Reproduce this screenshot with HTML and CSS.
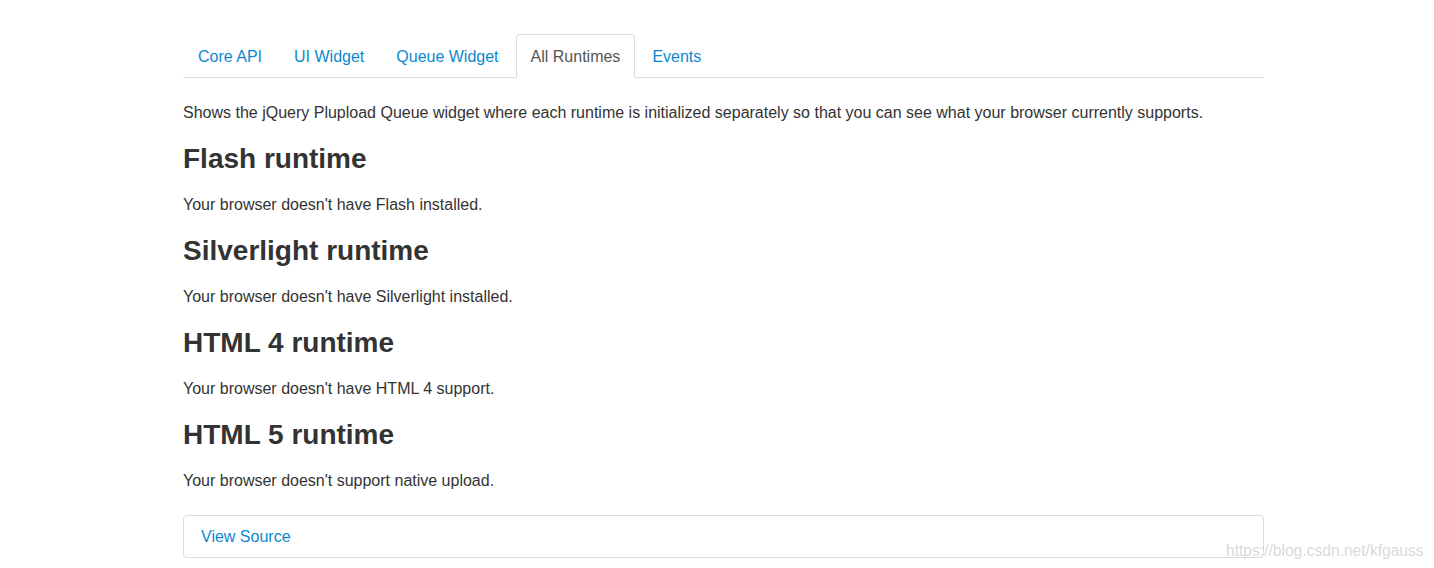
FILE: index.html
```html
<!DOCTYPE html>
<html lang="en">
<head>
<meta charset="utf-8">
<title>Plupload – All Runtimes</title>
<link rel="stylesheet" href="styles.css">
</head>
<body>
<div class="container">
  <ul class="nav-tabs">
    <li><a href="#">Core API</a></li>
    <li><a href="#">UI Widget</a></li>
    <li><a href="#">Queue Widget</a></li>
    <li class="active"><a href="#">All Runtimes</a></li>
    <li><a href="#">Events</a></li>
  </ul>
  <div class="tab-content">
    <p>Shows the jQuery Plupload Queue widget where each runtime is initialized separately so that you can see what your browser currently supports.</p>
    <h2>Flash runtime</h2>
    <p>Your browser doesn't have Flash installed.</p>
    <h2>Silverlight runtime</h2>
    <p>Your browser doesn't have Silverlight installed.</p>
    <h2>HTML 4 runtime</h2>
    <p>Your browser doesn't have HTML 4 support.</p>
    <h2>HTML 5 runtime</h2>
    <p>Your browser doesn't support native upload.</p>
    <div class="panel"><a href="#">View Source</a></div>
  </div>
</div>
<div class="watermark">https://blog.csdn.net/kfgauss</div>
</body>
</html>
```
FILE: styles.css
```css
html, body {
  margin: 0;
  padding: 0;
  background: #fff;
}
body {
  font-family: "Liberation Sans", Arial, Helvetica, sans-serif;
  font-size: 16px;
  line-height: 22px;
  color: #333;
  position: relative;
  min-height: 568px;
}
a {
  color: #0c88d0;
  text-decoration: none;
}
.container {
  width: 1081px;
  margin-left: 183px;
  padding-top: 34px;
}
.nav-tabs {
  list-style: none;
  margin: 0;
  padding: 0;
  display: flex;
  border-bottom: 1px solid #ddd;
}
.nav-tabs li {
  margin-right: 2px;
  margin-bottom: -1px;
}
.nav-tabs a {
  display: block;
  padding: 11px 14px 9px;
  line-height: 22px;
  border: 1px solid transparent;
  border-radius: 4px 4px 0 0;
}
.nav-tabs .active a {
  color: #555;
  background: #fff;
  border-color: #ddd;
  border-bottom-color: transparent;
}
.tab-content {
  padding-top: 4px;
}
.tab-content p {
  margin: 20px 0;
}
.tab-content h2 {
  font-size: 28px;
  line-height: 30px;
  font-weight: bold;
  margin: 20px 0;
  color: #333;
}
.panel {
  margin-top: 23px;
  border: 1px solid #ddd;
  border-radius: 4px;
  padding: 10px 17px;
  line-height: 21px;
}
.watermark {
  position: absolute;
  left: 1226px;
  top: 540px;
  font-size: 15.6px;
  line-height: 22px;
  color: #dadada;
}
```
